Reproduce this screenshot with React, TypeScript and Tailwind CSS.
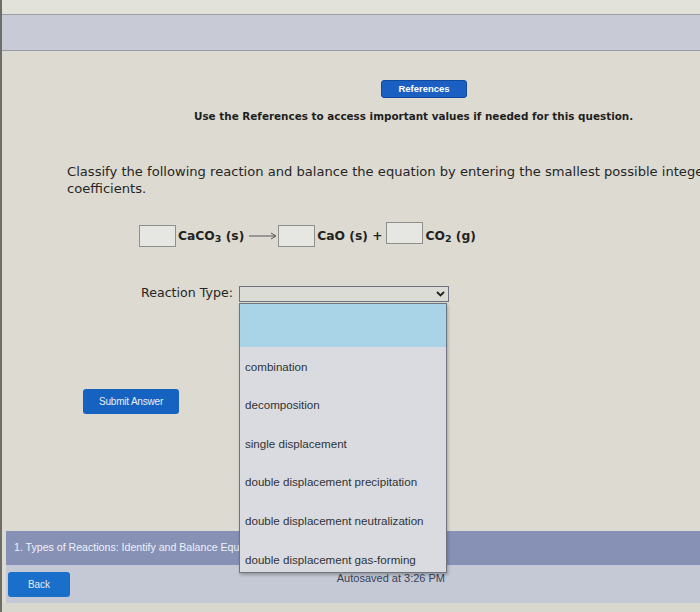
import React from "react";

const options = [
  "combination",
  "decomposition",
  "single displacement",
  "double displacement precipitation",
  "double displacement neutralization",
  "double displacement gas-forming",
];

function Box() {
  return <span className="inline-block w-[37px] h-[22px] bg-[#e6e6e2] border border-[#8e8e8a]" />;
}

export default function App() {
  return (
    <div className="relative w-[700px] h-[612px] overflow-hidden bg-[#dcdad1] flex flex-col border-l-2 border-[#6e6e68] font-['DejaVu_Sans',sans-serif] text-[#2a2a2a]">
      <div className="h-[14px] bg-[#e3e2da] shrink-0" />
      <div className="h-[37px] shrink-0 bg-[#c8cbd5] border-y border-[#9a9ca6]" />

      <main className="flex-1 flex flex-col">
        <div className="mt-[24px] ml-[379px]">
          <button className="w-[86px] h-[18px] rounded-[3px] bg-[#1b5fc2] border border-[#0f4aa0] text-white text-[9.5px] font-bold leading-none font-['Liberation_Sans',sans-serif]">
            References
          </button>
        </div>
        <p className="mt-[11px] ml-[192px] text-[10.4px] font-bold leading-[12px] text-[#1e1e1e] whitespace-nowrap">
          Use the References to access important values if needed for this question.
        </p>

        <p className="mt-[41px] ml-[65px] w-[680px] text-[13.1px] leading-[17px] text-[#262626]">
          Classify the following reaction and balance the equation by entering the smallest possible integer
          coefficients.
        </p>

        <div className="mt-[25px] ml-[137px] flex items-center text-[12.3px] font-bold text-[#222] whitespace-nowrap">
          <Box />
          <span className="ml-[2px]">
            CaCO<sub className="text-[9.5px] relative top-[2px]">3</sub> (s)
          </span>
          <svg width="30" height="10" viewBox="0 0 30 10" className="ml-[4px]">
            <line x1="1" y1="5" x2="27" y2="5" stroke="#555" strokeWidth="1" />
            <path d="M23 2 L28 5 L23 8" fill="none" stroke="#555" strokeWidth="1" />
          </svg>
          <Box />
          <span className="ml-[2px]">CaO (s) +</span>
          <span className="ml-[4px]">
            <Box />
          </span>
          <span className="ml-[2px]">
            CO<sub className="text-[9.5px] relative top-[2px]">2</sub> (g)
          </span>
        </div>

        <div className="mt-[35px] ml-[139px] flex items-center">
          <span className="text-[12.6px] text-[#262626] w-[98px]">Reaction Type:</span>
          <div className="w-[210px] h-[16px] bg-[#dcdcd7] border border-[#6c7080] flex items-center justify-end pr-[3px]">
            <svg width="9" height="6" viewBox="0 0 9 6">
              <path d="M1 1 L4.5 4.5 L8 1" fill="none" stroke="#222" strokeWidth="1.8" />
            </svg>
          </div>
        </div>

        <div className="mt-[85px] ml-[81px]">
          <button className="w-[96px] h-[25px] rounded-[3px] bg-[#1562c0] text-[#e8eefa] text-[10px] tracking-[-0.2px] font-['Liberation_Sans',sans-serif]">
            Submit Answer
          </button>
        </div>
      </main>

      <footer className="shrink-0 font-['Liberation_Sans',sans-serif]">
        <div className="ml-[4px] h-[34px] bg-[#8791b6] flex items-center pl-[8px] text-[10.6px] text-[#eef1f8] whitespace-nowrap">
          1. Types of Reactions: Identify and Balance Equations
        </div>
        <div className="ml-[4px] h-[38px] bg-[#c4c9d5] flex items-center pl-[2px]">
          <button className="w-[62px] h-[25px] rounded-[3px] bg-[#1a6fca] text-[#e4ecf8] text-[10px]">Back</button>
          <span className="ml-auto mr-[255px] -mt-[12px] text-[11px] text-[#3a4258]">Autosaved at 3:26 PM</span>
        </div>
        <div className="h-[9px] bg-[#d9d8cf]" />
      </footer>

      <div className="absolute left-[237px] top-[303px] w-[208px] h-[270px] overflow-hidden bg-[#d9dbe0] border border-[#70747e] shadow-[1px_2px_3px_rgba(0,0,0,0.25)] font-['Liberation_Sans',sans-serif]">
        <div className="h-[43px] bg-[#a9d3e7]" />
        {options.map((o) => (
          <div key={o} className="h-[38.6px] flex items-center pl-[5px] text-[11.6px] text-[#303338] whitespace-nowrap">
            {o}
          </div>
        ))}
      </div>
    </div>
  );
}
